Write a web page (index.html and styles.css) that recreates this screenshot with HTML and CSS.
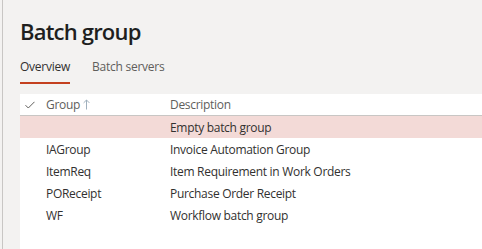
FILE: index.html
```html
<!DOCTYPE html>
<html>
<head>
<meta charset="utf-8">
<link rel="stylesheet" href="styles.css">
</head>
<body>
<div class="page">
  <h1 class="title">Batch group</h1>
  <div class="tabs">
    <div class="tab active">Overview</div>
    <div class="tab">Batch servers</div>
  </div>
  <div class="grid">
    <div class="row head">
      <div class="c-check"><svg width="10" height="8" viewBox="0 0 10 8"><path d="M0.5 4.2 L3.3 7 L9.5 0.8" fill="none" stroke="#605e5c" stroke-width="1"/></svg></div>
      <div class="c-group">Group <svg class="arrow" width="7" height="11" viewBox="0 0 7 11"><path d="M3.5 10.5 V1 M0.6 3.9 L3.5 1 L6.4 3.9" fill="none" stroke="#9fb0bd" stroke-width="1"/></svg></div>
      <div class="c-desc">Description</div>
    </div>
    <div class="row selected">
      <div class="c-check"></div>
      <div class="c-group"></div>
      <div class="c-desc">Empty batch group</div>
    </div>
    <div class="row">
      <div class="c-check"></div>
      <div class="c-group">IAGroup</div>
      <div class="c-desc">Invoice Automation Group</div>
    </div>
    <div class="row">
      <div class="c-check"></div>
      <div class="c-group">ItemReq</div>
      <div class="c-desc">Item Requirement in Work Orders</div>
    </div>
    <div class="row">
      <div class="c-check"></div>
      <div class="c-group">POReceipt</div>
      <div class="c-desc">Purchase Order Receipt</div>
    </div>
    <div class="row">
      <div class="c-check"></div>
      <div class="c-group">WF</div>
      <div class="c-desc">Workflow batch group</div>
    </div>
  </div>
</div>
</body>
</html>
```
FILE: styles.css
```css
html, body {
  margin: 0;
  padding: 0;
  background: #f3f2f1;
}
body {
  font-family: "Open Sans", "Noto Sans", sans-serif;
  color: #323130;
}
.page {
  margin-left: 2px;
  border-left: 1px solid #c8c6c4;
  height: 249px;
  padding-left: 17px;
  display: flex;
  flex-direction: column;
  box-sizing: border-box;
}
.title {
  margin: 16px 0 0 0;
  font-size: 22px;
  font-weight: 600;
  line-height: 30px;
  letter-spacing: -0.8px;
  color: #201f1e;
}
.tabs {
  display: flex;
  gap: 22px;
  margin-top: 12px;
  height: 27px;
}
.tab {
  font-size: 12px;
  line-height: 18px;
  letter-spacing: -0.25px;
  color: #605e5c;
}
.tab.active {
  color: #323130;
  position: relative;
}
.tab.active::after {
  content: "";
  position: absolute;
  left: 0;
  right: 0;
  top: 24px;
  height: 2px;
  background: #c4401f;
}
.grid {
  margin-top: 9px;
  background: #fff;
  flex: 1;
}
.row {
  display: flex;
  align-items: center;
  height: 22px;
  font-size: 12px;
  letter-spacing: -0.3px;
}
.row.head {
  height: 21px;
  border-bottom: 1px solid #c8c6c4;
  color: #605e5c;
}
.row.selected {
  background: #f3dad7;
}
.c-check {
  width: 26px;
  padding-left: 5px;
  box-sizing: border-box;
  display: flex;
  align-items: center;
}
.c-group {
  width: 124px;
  display: flex;
  align-items: center;
  gap: 3px;
}
.arrow {
  display: block;
}
.c-desc {
  flex: 1;
}
```
